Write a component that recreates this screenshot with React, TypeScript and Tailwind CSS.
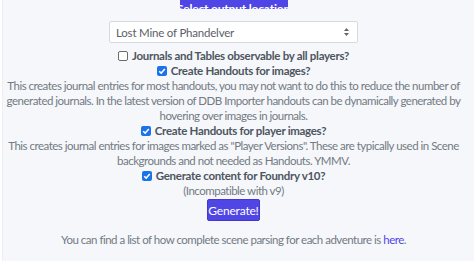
import React from "react";

function Check({ checked }: { checked: boolean }) {
  return checked ? (
    <span className="inline-block w-[10px] h-[10px] rounded-[2px] bg-[#1a73e8] relative mr-[4px] align-[-1px]">
      <svg viewBox="0 0 12 12" className="absolute inset-0 w-full h-full">
        <path d="M2.6 6.2 L5 8.5 L9.4 3.6" stroke="white" strokeWidth="1.8" fill="none" />
      </svg>
    </span>
  ) : (
    <span className="inline-block w-[10px] h-[10px] rounded-[2px] border border-[#6b6b6b] bg-white mr-[4px] align-[-1px]" />
  );
}

export default function App() {
  return (
    <div className="w-[474px] h-[266px] bg-white overflow-hidden" style={{ fontFamily: "Lato, 'Segoe UI', sans-serif" }}>
      <div className="h-[261px] ml-[2px] bg-[#f5f7fa] border-l border-[#eceef1] pl-[1px] pr-[11px]">
        <div className="flex flex-col items-center text-[11.5px] leading-[15px] text-[#737a83] text-center tracking-[-0.5px]">
          <div className="h-[9px] w-[108px] bg-[#5046e5] rounded-b-[2px] overflow-hidden flex items-end justify-center">
            <span className="whitespace-nowrap text-white font-bold text-[12px] leading-[12px] translate-y-[6px] tracking-[-0.2px]">Select output location</span>
          </div>
          <div className="mt-[12px] w-[249px] h-[22px] bg-white border border-[#d7dbe0] rounded-[2px] flex items-center justify-between pl-[6px] pr-[8px]">
            <span className="text-[#5b6068] text-[11.5px] tracking-[-0.2px]">Lost Mine of Phandelver</span>
            <svg width="5" height="8" viewBox="0 0 5 8"><path d="M0 3 L2.5 0 L5 3Z M0 5 L2.5 8 L5 5Z" fill="#666" /></svg>
          </div>
          <div className="mt-[5px] font-bold text-[#4d5560] tracking-[-0.3px]"><Check checked={false} />Journals and Tables observable by all players?</div>
          <div className="font-bold text-[#4d5560] tracking-[-0.3px]"><Check checked />Create Handouts for images?</div>
          <div>This creates journal entries for most handouts, you may not want to do this to reduce the number of generated journals. In the latest version of DDB Importer handouts can be dynamically generated by hovering over images in journals.</div>
          <div className="font-bold text-[#4d5560] tracking-[-0.3px]"><Check checked />Create Handouts for player images?</div>
          <div>This creates journal entries for images marked as "Player Versions". These are typically used in Scene backgrounds and not needed as Handouts. YMMV.</div>
          <div className="font-bold text-[#4d5560] tracking-[-0.3px]"><Check checked />Generate content for Foundry v10?</div>
          <div>(Incompatible with v9)</div>
          <button className="mt-[1px] h-[22px] w-[53px] bg-[#5046e5] text-white text-[12px] rounded-[2px] border border-[#4338ca] tracking-[-0.2px]">Generate!</button>
          <div className="mt-[11px]">You can find a list of how complete scene parsing for each adventure is <span className="text-[#5046e5]">here</span>.</div>
        </div>
      </div>
    </div>
  );
}
